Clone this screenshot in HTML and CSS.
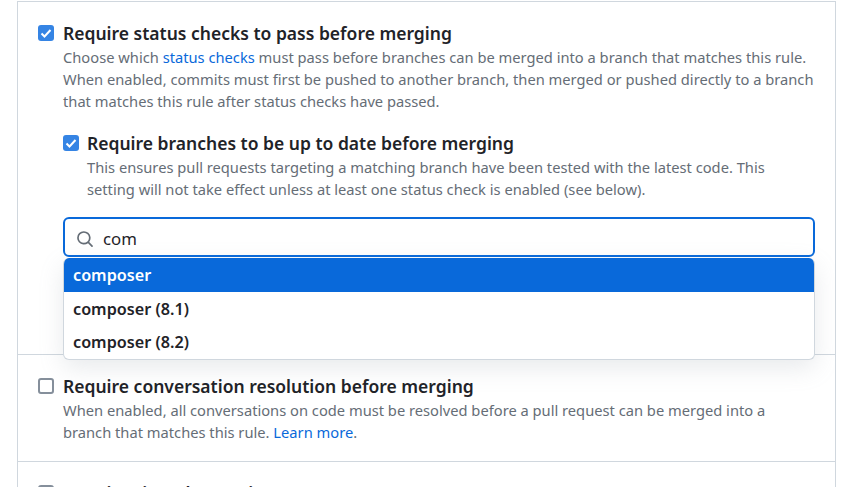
FILE: index.html
```html
<!DOCTYPE html>
<html lang="en">
<head>
  <meta charset="UTF-8">
  <title>Branch protection rule</title>
  <link rel="stylesheet" href="styles.css">
</head>
<body>
  <div class="rules">
    <div class="rule rule-first">
      <div class="check-row">
        <span class="checkbox checked">
          <svg viewBox="0 0 16 16"><path d="M3.5 8.5l3 3 6-6.5"/></svg>
        </span>
        <div class="check-body">
          <div class="check-title">Require status checks to pass before merging</div>
          <p class="note">Choose which <a href="#">status checks</a> must pass before branches can be merged into a branch that matches this rule. When enabled, commits must first be pushed to another branch, then merged or pushed directly to a branch that matches this rule after status checks have passed.</p>

          <div class="check-row nested">
            <span class="checkbox checked">
              <svg viewBox="0 0 16 16"><path d="M3.5 8.5l3 3 6-6.5"/></svg>
            </span>
            <div class="check-body">
              <div class="check-title">Require branches to be up to date before merging</div>
              <p class="note">This ensures pull requests targeting a matching branch have been tested with the latest code. This setting will not take effect unless at least one status check is enabled (see below).</p>
            </div>
          </div>

          <div class="search-wrap">
            <div class="search-box">
              <svg class="search-icon" viewBox="0 0 16 16"><path d="M10.68 11.74a6 6 0 0 1-7.92-8.98 6 6 0 0 1 8.98 7.92l3.04 3.04a.749.749 0 0 1-1.06 1.06ZM11.5 7a4.499 4.499 0 1 0-8.997 0A4.499 4.499 0 0 0 11.5 7Z"/></svg>
              <span class="search-text">com</span>
            </div>
            <ul class="suggestions">
              <li class="selected">composer</li>
              <li>composer (8.1)</li>
              <li>composer (8.2)</li>
            </ul>
          </div>
        </div>
      </div>
    </div>

    <div class="rule">
      <div class="check-row">
        <span class="checkbox"></span>
        <div class="check-body">
          <div class="check-title">Require conversation resolution before merging</div>
          <p class="note">When enabled, all conversations on code must be resolved before a pull request can be merged into a branch that matches this rule. <a href="#">Learn more</a>.</p>
        </div>
      </div>
    </div>

    <div class="rule rule-last">
      <div class="check-row">
        <span class="checkbox"></span>
        <div class="check-body">
          <div class="check-title">Require signed commits</div>
        </div>
      </div>
    </div>
  </div>
</body>
</html>
```

FILE: styles.css
```css
html, body {
  height: 487px;
  overflow: hidden;
}

body {
  margin: 0;
  padding: 1px 11px 0 17px;
  font-family: "Noto Sans", sans-serif;
  font-size: 14.7px;
  line-height: 22px;
  color: #1f2328;
  background-color: #fff;
}

a {
  color: #0969da;
  text-decoration: none;
}

.rules {
  height: 486px;
  box-sizing: border-box;
  overflow: hidden;
  border: 1px solid #d0d7de;
  border-bottom: none;
}

.rule {
  padding: 19px 20px 18px 20px;
  border-top: 1px solid #d0d7de;
}

.rule-first {
  border-top: none;
  height: 352px;
  box-sizing: border-box;
}

.check-row {
  display: flex;
  gap: 9px;
}

.nested {
  margin-top: 19px;
  gap: 8px;
}

.checkbox {
  flex: none;
  width: 16px;
  height: 16px;
  margin-top: 4px;
  box-sizing: border-box;
  border: 2px solid #858f9b;
  border-radius: 3px;
  background-color: #fff;
}

.checkbox.checked {
  border: none;
  background-color: #3584e4;
}

.checkbox svg {
  display: block;
  width: 16px;
  height: 16px;
  fill: none;
  stroke: #fff;
  stroke-width: 2;
}

.check-body {
  flex: 1;
  min-width: 0;
}

.check-title {
  font-size: 17.5px;
  font-weight: 600;
  line-height: 25px;
}

.note {
  margin: 0;
  color: #656d76;
}

.search-wrap {
  position: relative;
  margin-top: 17px;
}

.search-box {
  display: flex;
  align-items: center;
  gap: 9px;
  height: 40px;
  padding: 3px 11px 0;
  box-sizing: border-box;
  border: 2px solid #0969da;
  border-radius: 6px;
}

.search-icon {
  width: 18px;
  height: 18px;
  fill: #656d76;
}

.search-text {
  font-size: 16.8px;
}

.suggestions {
  position: absolute;
  top: 41px;
  left: 0;
  right: 0;
  margin: 0;
  padding: 0;
  list-style: none;
  overflow: hidden;
  background-color: #fff;
  border: 1px solid #d0d7de;
  border-top: none;
  border-radius: 6px;
  box-shadow: 0 8px 24px rgba(140, 149, 159, 0.2);
  font-size: 16.2px;
  font-weight: 600;
}

.suggestions li {
  height: 33.5px;
  padding: 0 9px;
  line-height: 34px;
}

.suggestions .selected {
  color: #fff;
  background-color: #0969da;
}
```
